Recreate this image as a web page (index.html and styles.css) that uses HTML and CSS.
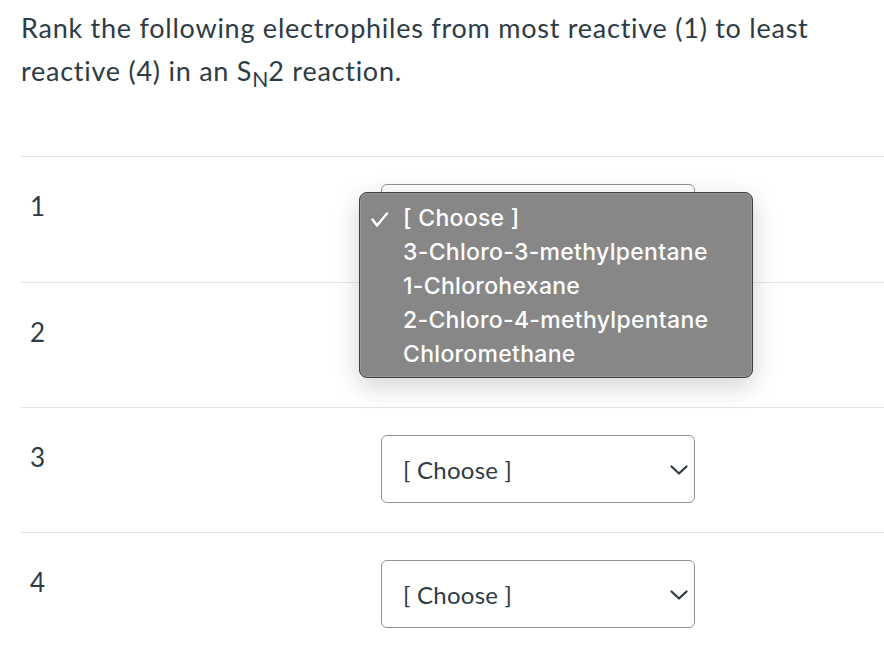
FILE: index.html
```html
<!DOCTYPE html>
<html lang="en">
<head>
    <meta charset="UTF-8">
    <link rel="stylesheet" href="styles.css">
</head>
<body>
    <div class="question">
        <p class="question-text">Rank the following electrophiles from most reactive (1) to least reactive (4) in an S<sub>N</sub>2 reaction.</p>

        <div class="answers">
            <div class="answer-row">
                <div class="answer-label">1</div>
                <div class="answer-select">
                    <span>[ Choose ]</span>
                    <svg class="chevron" width="18" height="10" viewBox="0 0 18 10"><path d="M1.5 1.5 L9 8.5 L16.5 1.5" fill="none" stroke="#2d3b45" stroke-width="2.2" stroke-linecap="round" stroke-linejoin="round"/></svg>
                </div>
            </div>
            <div class="answer-row">
                <div class="answer-label">2</div>
                <div class="answer-select">
                    <span>[ Choose ]</span>
                    <svg class="chevron" width="18" height="10" viewBox="0 0 18 10"><path d="M1.5 1.5 L9 8.5 L16.5 1.5" fill="none" stroke="#2d3b45" stroke-width="2.2" stroke-linecap="round" stroke-linejoin="round"/></svg>
                </div>
            </div>
            <div class="answer-row">
                <div class="answer-label">3</div>
                <div class="answer-select">
                    <span>[ Choose ]</span>
                    <svg class="chevron" width="18" height="10" viewBox="0 0 18 10"><path d="M1.5 1.5 L9 8.5 L16.5 1.5" fill="none" stroke="#2d3b45" stroke-width="2.2" stroke-linecap="round" stroke-linejoin="round"/></svg>
                </div>
            </div>
            <div class="answer-row">
                <div class="answer-label">4</div>
                <div class="answer-select">
                    <span>[ Choose ]</span>
                    <svg class="chevron" width="18" height="10" viewBox="0 0 18 10"><path d="M1.5 1.5 L9 8.5 L16.5 1.5" fill="none" stroke="#2d3b45" stroke-width="2.2" stroke-linecap="round" stroke-linejoin="round"/></svg>
                </div>
            </div>

            <!-- open native dropdown for row 1 -->
            <div class="dropdown">
                <div class="dropdown-item selected">
                    <svg class="check" width="18" height="15" viewBox="0 0 18 15"><path d="M1.5 7.5 L6 13.5 L16 1.5" fill="none" stroke="#fff" stroke-width="2.4" stroke-linecap="round" stroke-linejoin="round"/></svg>
                    [&nbsp;Choose&nbsp;]
                </div>
                <div class="dropdown-item">3-Chloro-3-methylpentane</div>
                <div class="dropdown-item">1-Chlorohexane</div>
                <div class="dropdown-item">2-Chloro-4-methylpentane</div>
                <div class="dropdown-item">Chloromethane</div>
            </div>
        </div>
    </div>
</body>
</html>
```

FILE: styles.css
```css
body {
    margin: 0;
    background: #fff;
    font-family: Lato, "Open Sans", sans-serif;
    color: #2d3b45;
}
.question {
    padding: 6px 0 0 21px;
}
.question-text {
    margin: 0 0 64px 0;
    font-size: 27px;
    line-height: 43px;
    letter-spacing: 0.75px;
    max-width: 820px;
}
.question-text sub {
    font-size: 0.78em;
    line-height: 0;
    vertical-align: -0.28em;
    letter-spacing: 0;
}
.answers {
    position: relative;
}
.answer-row {
    display: grid;
    grid-template-columns: 360px 314px;
    align-items: start;
    border-top: 1px solid #e2e4e6;
    padding: 27px 0 29px;
}
.answer-row:first-child {
    padding-bottom: 30px;
}
.answer-label {
    padding-left: 9px;
    margin-top: 1px;
    font-size: 26px;
    line-height: 43px;
}
.answer-select {
    box-sizing: border-box;
    height: 68px;
    border: 1px solid #8b949b;
    border-radius: 6px;
    display: flex;
    align-items: center;
    justify-content: space-between;
    padding: 0 6px 0 21px;
    font-size: 24px;
    letter-spacing: 0.25px;
    background: #fff;
}
.chevron {
    display: block;
    margin-top: 1px;
}
.dropdown {
    position: absolute;
    top: 36px;
    left: 338px;
    width: 394px;
    height: 186px;
    box-sizing: border-box;
    padding: 8px 0 0 0;
    background: #878787;
    border: 1px solid #3e3e3e;
    border-radius: 8px;
    box-shadow: inset 0 0 0 1px rgba(255, 255, 255, 0.14), 0 8px 26px rgba(0, 0, 0, 0.18);
    font-family: Inter, Roboto, sans-serif;
    font-weight: 500;
    font-size: 23px;
    letter-spacing: 0.3px;
    color: #fff;
}
.dropdown-item {
    position: relative;
    height: 34px;
    line-height: 34px;
    padding-left: 43px;
    white-space: nowrap;
}
.check {
    position: absolute;
    left: 11px;
    top: 11px;
}
```
